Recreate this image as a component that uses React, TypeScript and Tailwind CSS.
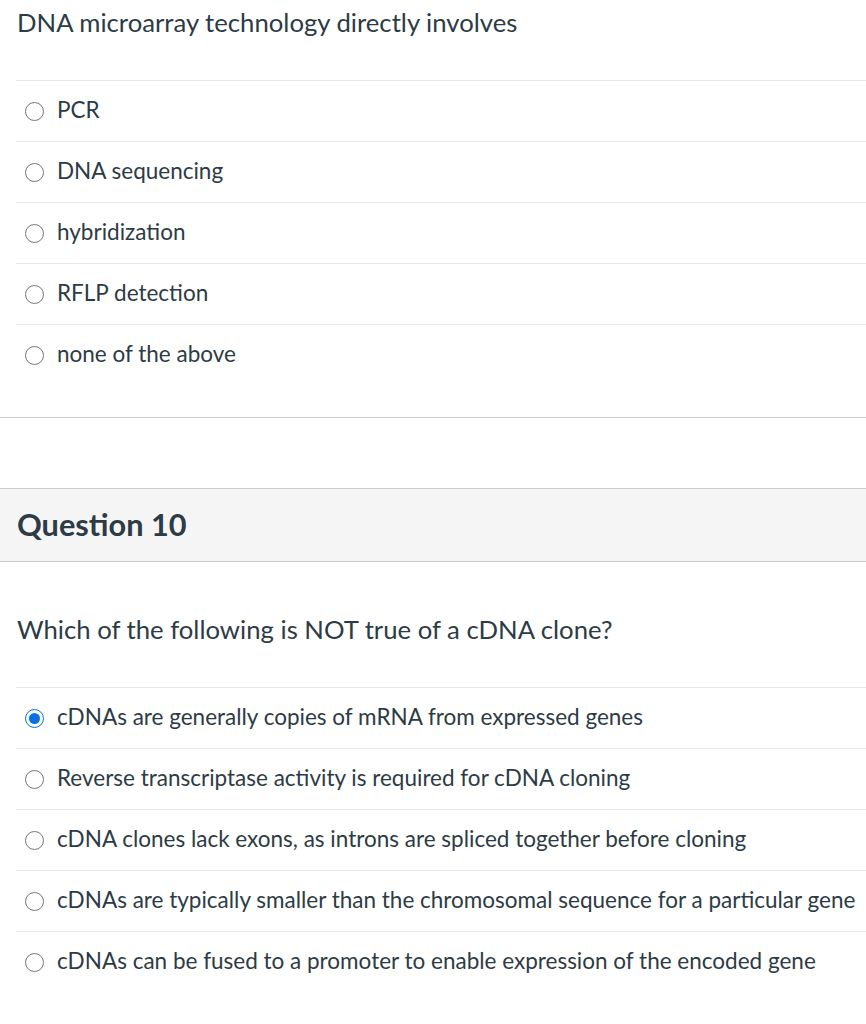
import React from "react";

const q1 = ["PCR", "DNA sequencing", "hybridization", "RFLP detection", "none of the above"];
const q2 = [
  "cDNAs are generally copies of mRNA from expressed genes",
  "Reverse transcriptase activity is required for cDNA cloning",
  "cDNA clones lack exons, as introns are spliced together before cloning",
  "cDNAs are typically smaller than the chromosomal sequence for a particular gene",
  "cDNAs can be fused to a promoter to enable expression of the encoded gene",
];

function Radio({ checked }: { checked?: boolean }) {
  if (checked) {
    return (
      <span className="flex h-[19px] w-[19px] shrink-0 items-center justify-center rounded-full border-[1.5px] border-[#0770e3] bg-white">
        <span className="h-[11px] w-[11px] rounded-full bg-[#0770e3]" />
      </span>
    );
  }
  return <span className="h-[19px] w-[19px] shrink-0 rounded-full border-[1.5px] border-[#777777] bg-white" />;
}

function Option({ text, checked }: { text: string; checked?: boolean }) {
  return (
    <div className="flex h-[61px] items-center gap-[13px] border-t border-[#e5e7e8] pl-[9px]">
      <Radio checked={checked} />
      <span className="pb-[2px] text-[22.5px] leading-none text-[#2d3b45]">{text}</span>
    </div>
  );
}

export default function App() {
  return (
    <div className="w-[866px] bg-white" style={{ fontFamily: "Lato, 'Open Sans', sans-serif" }}>
      <div className="border-b border-[#c7cdd1]">
        <div className="flex h-[46px] items-center pl-[17px] text-[25.7px] leading-none text-[#2d3b45]">
          DNA microarray technology directly involves
        </div>
        <div className="mt-[34px] ml-4 pb-[32px]">
          {q1.map((t) => (
            <Option key={t} text={t} />
          ))}
        </div>
      </div>
      <div className="h-[70px]" />
      <div className="flex h-[74px] items-center border-y border-[#c7cdd1] bg-[#f5f5f5] pl-[17px] text-[30.7px] leading-none font-bold text-[#2d3b45]">
        Question 10
      </div>
      <div className="flex h-[125px] items-center pl-[17px] pt-[10px] text-[25.7px] leading-none text-[#2d3b45]">
        Which of the following is NOT true of a cDNA clone?
      </div>
      <div className="ml-4">
        {q2.map((t, i) => (
          <Option key={t} text={t} checked={i === 0} />
        ))}
      </div>
    </div>
  );
}
